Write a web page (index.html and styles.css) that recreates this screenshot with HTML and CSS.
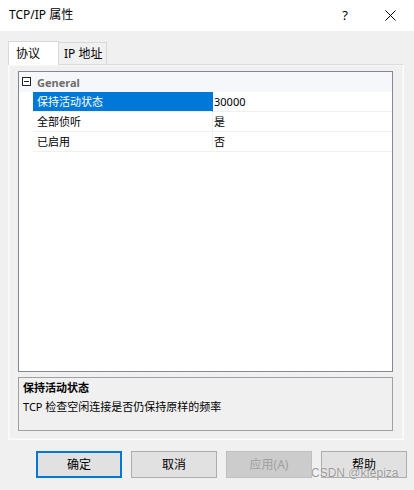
FILE: index.html
```html
<!DOCTYPE html>
<html lang="zh-CN">
<head>
<meta charset="utf-8">
<title>TCP/IP 属性</title>
<link rel="stylesheet" href="styles.css">
</head>
<body>
<div class="window">
  <div class="titlebar">
    <span class="title">TCP/IP 属性</span>
    <span class="help">?</span>
    <span class="close">
      <svg width="11" height="11" viewBox="0 0 11 11"><path d="M0.5 0.5L10.5 10.5M10.5 0.5L0.5 10.5" stroke="#000" stroke-width="1" fill="none"/></svg>
    </span>
  </div>
  <div class="tabstrip">
    <div class="tab tab-active">协议</div>
    <div class="tab tab-inactive">IP 地址</div>
  </div>
  <div class="panel">
    <div class="grid">
      <div class="cat-row">
        <span class="gutter">
          <svg width="9" height="9" viewBox="0 0 9 9"><rect x="0.5" y="0.5" width="8" height="8" fill="#fff" stroke="#222"/><path d="M2 4.5H7" stroke="#222"/></svg>
        </span>
        <span class="cat-name">General</span>
      </div>
      <div class="prop-row">
        <span class="gutter"></span>
        <span class="prop-name selected">保持活动状态</span>
        <span class="prop-value">30000</span>
      </div>
      <div class="prop-row">
        <span class="gutter"></span>
        <span class="prop-name">全部侦听</span>
        <span class="prop-value">是</span>
      </div>
      <div class="prop-row">
        <span class="gutter"></span>
        <span class="prop-name">已启用</span>
        <span class="prop-value">否</span>
      </div>
    </div>
    <div class="desc">
      <div class="desc-title">保持活动状态</div>
      <div class="desc-text">TCP 检查空闲连接是否仍保持原样的频率</div>
    </div>
  </div>
  <div class="buttons">
    <div class="btn btn-default">确定</div>
    <div class="btn">取消</div>
    <div class="btn btn-disabled">应用(A)</div>
    <div class="btn">帮助</div>
  </div>
  <div class="watermark">CSDN @kfepiza</div>
</div>
</body>
</html>
```
FILE: styles.css
```css
* { box-sizing: border-box; }
html, body {
  margin: 0;
  padding: 0;
}
body {
  width: 414px;
  height: 490px;
  background: #f0f0f0;
  font-family: "Noto Sans", "Noto Sans CJK SC", sans-serif;
  color: #000;
  overflow: hidden;
}
.window {
  position: relative;
  width: 414px;
  height: 490px;
}
.titlebar {
  height: 31px;
  background: #fff;
  display: flex;
  align-items: center;
  font-size: 12px;
  line-height: 16px;
}
.title {
  padding-left: 9px;
  flex: 1;
  margin-top: -1px;
}
.help {
  width: 12px;
  text-align: center;
  font-size: 13px;
  margin-right: 34px;
  margin-top: -1px;
}
.close {
  display: flex;
  width: 11px;
  height: 11px;
  margin-right: 18px;
  margin-top: -1px;
}
.tabstrip {
  height: 33px;
  display: flex;
  align-items: flex-end;
  padding-left: 8px;
  font-size: 12px;
  line-height: 16px;
}
.tab {
  display: flex;
  align-items: center;
  border: 1px solid #d9d9d9;
  border-bottom: none;
}
.tab-active {
  width: 51px;
  height: 24px;
  background: #fff;
  padding-left: 7px;
  margin-bottom: -1px;
  position: relative;
  z-index: 1;
}
.tab-inactive {
  width: 48px;
  height: 22px;
  background: #f0f0f0;
  border-left: none;
  padding-left: 5px;
}
.panel {
  margin-left: 8px;
  width: 396px;
  height: 376px;
  border: 1px solid #fbfbfb;
  border-top-color: #dcdcdc;
  box-shadow: inset 0 0 0 1px #f6f6f6;
  padding: 6px 10px 8px 9px;
  display: flex;
  flex-direction: column;
}
.grid {
  height: 301px;
  border: 1px solid #828790;
  background: #fff;
  font-size: 11px;
  line-height: 19px;
}
.cat-row {
  height: 20px;
  display: flex;
  align-items: center;
  background: #f5f7fa;
}
.gutter {
  width: 14px;
  flex: none;
  display: flex;
  align-items: center;
  padding-left: 3px;
}
.cat-row .gutter svg { display: block; margin-top: -1px; }
.cat-name {
  font-weight: bold;
  color: #6d6d6d;
  padding-left: 4px;
  font-size: 11px;
}
.prop-row {
  height: 20px;
  display: flex;
}
.prop-name {
  width: 180px;
  flex: none;
  padding-left: 4px;
  border-bottom: 1px solid #f0f0f0;
  border-right: 1px solid #f0f0f0;
}
.prop-name.selected {
  background: #0078d7;
  color: #fff;
  border-right-color: #0078d7;
}
.prop-value {
  flex: 1;
  padding-left: 1px;
  border-bottom: 1px solid #f0f0f0;
}
.desc {
  margin-top: 5px;
  height: 54px;
  border: 1px solid #a0a0a0;
  background: #f0f0f0;
  padding: 2px 4px 0 4px;
  font-size: 11px;
  line-height: 15px;
}
.desc-title {
  font-weight: bold;
}
.desc-text {
  margin-top: 4px;
}
.buttons {
  margin-top: 11px;
  padding-left: 36px;
  display: flex;
  gap: 9px;
}
.btn {
  width: 86px;
  height: 27px;
  background: #e1e1e1;
  border: 1px solid #adadad;
  font-size: 12px;
  line-height: 16px;
  display: flex;
  align-items: center;
  justify-content: center;
}
.btn-default {
  border: 2px solid #0078d7;
}
.btn-disabled {
  background: #cccccc;
  border-color: #bfbfbf;
  color: #a0a0a0;
}
.watermark {
  position: absolute;
  left: 311px;
  top: 466px;
  font-family: "Liberation Sans", sans-serif;
  font-size: 12px;
  line-height: 14px;
  color: rgba(110, 110, 110, 0.7);
  text-shadow: 0 0 1px #fff;
}
```
